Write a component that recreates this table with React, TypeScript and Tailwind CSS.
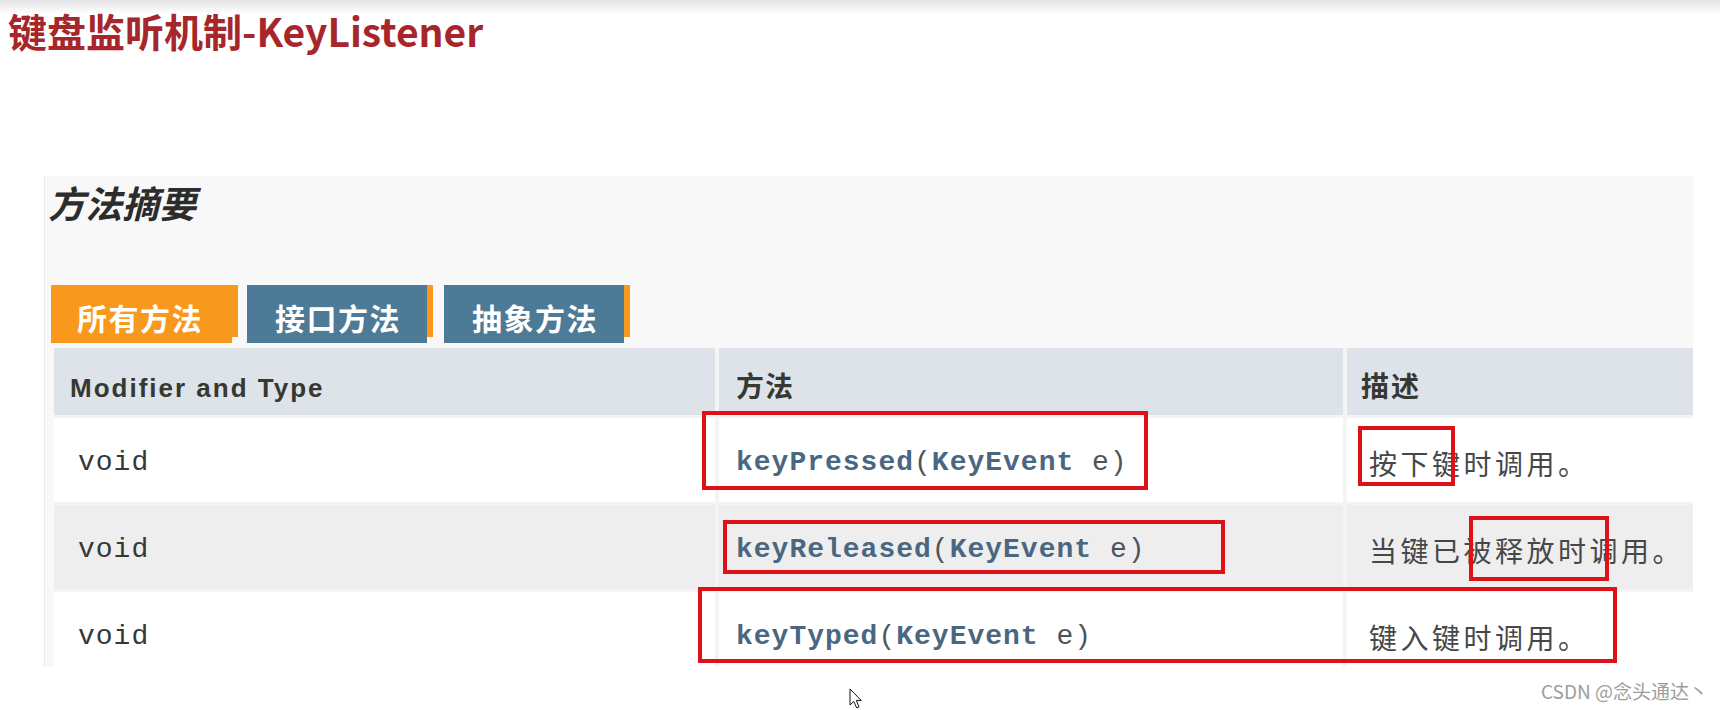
import React from 'react';

const cjk = "font-['Noto_Sans_CJK_SC',sans-serif]";
const mono = "font-['Liberation_Mono',monospace]";

type Row = { name: string; desc: string; shade: boolean };

const rows: Row[] = [
    { name: 'keyPressed', desc: '按下键时调用。', shade: false },
    { name: 'keyReleased', desc: '当键已被释放时调用。', shade: true },
    { name: 'keyTyped', desc: '键入键时调用。', shade: false },
];

function Tab({ label, active }: { label: string; active?: boolean }) {
    return (
        <div className="flex items-start">
            <div
                className={
                    'h-[58px] flex items-center pt-[6px] text-white font-bold text-[30px] tracking-[1.5px] leading-none ' +
                    (active ? 'w-[181px] pl-[26px] bg-[#f8981d]' : 'w-[180px] pl-[28px] bg-[#4d7a97]')
                }
            >
                {label}
            </div>
            <div className="w-[6px] h-[52px] bg-[#f8981d]" />
        </div>
    );
}

// red annotation rectangles drawn on top of the screenshot
const marks = [
    'left-[702px] top-[411px] w-[446px] h-[79px]',
    'left-[1358px] top-[426px] w-[97px] h-[60px]',
    'left-[723px] top-[520px] w-[502px] h-[54px]',
    'left-[1469px] top-[516px] w-[140px] h-[65px]',
    'left-[698px] top-[587px] w-[919px] h-[76px]',
];

export default function App() {
    return (
        <div className={`relative w-[1720px] h-[710px] overflow-hidden bg-[linear-gradient(to_bottom,#e4e4e4_0px,#ffffff_14px)] ${cjk}`}>
            <h1 className="pl-[8px] pt-[5px] text-[39px] leading-[50px] font-bold text-[#a7262b]">
                键盘监听机制-KeyListener
            </h1>

            <section className="ml-[44px] mt-[121px] w-[1649px] h-[491px] overflow-hidden bg-[#f8f8f8] border-l border-[#ebebeb]">
                <h3 className="pl-[3px] pt-[4px] text-[37px] leading-[44px] font-bold italic text-[#2c2c2c]">方法摘要</h3>

                <div className="mt-[61px] pl-[6px] flex">
                    <Tab label="所有方法" active />
                    <div className="ml-[9px]">
                        <Tab label="接口方法" />
                    </div>
                    <div className="ml-[11px]">
                        <Tab label="抽象方法" />
                    </div>
                </div>

                <div className="mt-[5px] ml-[9px] grid grid-cols-[661px_624px_1fr] gap-x-[4px] gap-y-[3px] bg-[#f4f4f4]">
                    <div className="h-[67px] bg-[#dee3e9] flex items-center pt-[14px] pl-[16px] font-['Liberation_Sans',sans-serif] font-bold text-[26px] tracking-[2px] text-[#353833]">
                        Modifier and Type
                    </div>
                    <div className="h-[67px] bg-[#dee3e9] flex items-center pt-[7px] pl-[17px] font-bold text-[28px] tracking-[1px] text-[#353833]">
                        方法
                    </div>
                    <div className="h-[67px] bg-[#dee3e9] flex items-center pt-[7px] pl-[14px] font-bold text-[28px] tracking-[2px] text-[#353833]">
                        描述
                    </div>

                    {rows.map((r) => {
                        const bg = r.shade ? 'bg-[#eeeeef]' : 'bg-white';
                        return (
                            <React.Fragment key={r.name}>
                                <div className={`h-[84px] flex items-center pt-[5px] pl-[24px] ${bg} ${mono} text-[28px] tracking-[1px] text-[#353833]`}>
                                    void
                                </div>
                                <div className={`h-[84px] flex items-center pt-[5px] pl-[17px] ${bg} ${mono} text-[28px] tracking-[1px] text-[#4d5459] whitespace-pre`}>
                                    <span className="font-bold text-[#4a6782]">{r.name}</span>
                                    <span>(</span>
                                    <span className="font-bold text-[#4a6782]">KeyEvent</span>
                                    <span> e)</span>
                                </div>
                                <div className={`h-[84px] flex items-center pt-[6px] pl-[22px] ${bg} text-[28px] tracking-[3.5px] text-[#474747]`}>
                                    {r.desc}
                                </div>
                            </React.Fragment>
                        );
                    })}
                </div>
            </section>

            {marks.map((m) => (
                <div key={m} className={`absolute ${m} border-[4px] border-[#dd1219]`} />
            ))}

            <svg className="absolute left-[849px] top-[688px]" width="13" height="21" viewBox="0 0 13 21">
                <path d="M1 1 L1 17 L4.8 13.4 L7.6 19.8 L10 18.8 L7.3 12.4 L12.2 12.4 Z" fill="#fff" stroke="#111" strokeWidth="1" strokeLinejoin="round" />
            </svg>

            <div className="absolute left-[1541px] top-[680px] text-[19px] leading-[22px] text-[#9d9d9d]">
                CSDN @念头通达丶
            </div>
        </div>
    );
}
